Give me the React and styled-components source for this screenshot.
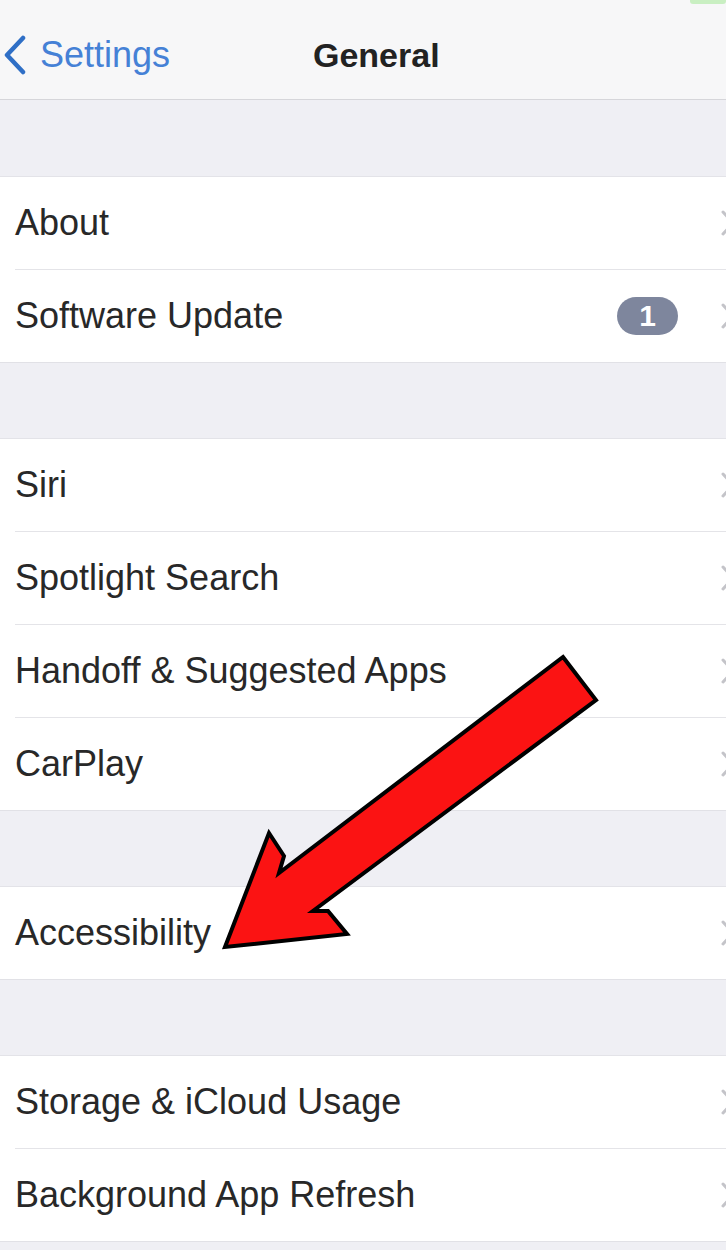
import React from "react"
import styled, {createGlobalStyle} from "styled-components"

const Global = createGlobalStyle`
    html, body {
        margin: 0px;
        padding: 0px;
        background-color: #efeff4;
    }
    body {
        font-family: "Liberation Sans", Arial, sans-serif;
        -webkit-font-smoothing: antialiased;
    }
`

const Screen = styled.div`
    position: relative;
    width: 726px;
    height: 1250px;
    overflow: hidden;
    background-color: #efeff4;
`
const StatusStrip = styled.div`
    display: flex;
    justify-content: flex-end;
    height: 6px;
    background-color: #f7f7f8;
`
const BatteryTip = styled.div`
    width: 36px;
    height: 4px;
    border-radius: 0px 0px 3px 3px;
    background-color: #c9efc2;
`
const NavBar = styled.div`
    display: flex;
    align-items: center;
    height: 93px;
    background-color: #f7f7f8;
    border-bottom: 1px solid #d6d6da;
`
const BackButton = styled.div`
    display: flex;
    align-items: center;
    gap: 13px;
    padding-left: 3px;
    width: 290px;
    color: #4581d6;
    font-size: 36px;
    margin-top: 5px;
`
const Title = styled.div`
    font-size: 34px;
    font-weight: 700;
    color: #222222;
    margin-left: 20px;
    margin-top: 5px;
`
const Gap = styled.div`
    height: ${props => props.size}px;
    background-color: #efeff4;
    border-bottom: 1px solid #e3e3e8;
`
const Group = styled.div`
    background-color: #ffffff;
    border-bottom: 1px solid #e1e1e6;
`
const Row = styled.div`
    display: flex;
    align-items: center;
    height: 92px;
    margin-left: 15px;
    border-bottom: ${props => props.last ? "none" : "1px solid #e4e4e8"};
`
const Label = styled.div`
    flex: 1;
    font-size: 36px;
    color: #282828;
`
const Badge = styled.div`
    display: flex;
    align-items: center;
    justify-content: center;
    width: 61px;
    height: 38px;
    border-radius: 19px;
    background-color: #7e869d;
    color: #ffffff;
    font-size: 30px;
    font-weight: 700;
    margin-right: 43px;
`
const Chevron = styled.svg`
    flex: none;
    width: 14px;
    height: 26px;
    margin-right: -9px;
`

const ArrowLayer = styled.svg`
    position: absolute;
    top: 0px;
    left: 0px;
    pointer-events: none;
`

const groups = [
    [{label: "About"}, {label: "Software Update", badge: "1"}],
    [{label: "Siri"}, {label: "Spotlight Search"}, {label: "Handoff & Suggested Apps"}, {label: "CarPlay"}],
    [{label: "Accessibility"}],
    [{label: "Storage & iCloud Usage"}, {label: "Background App Refresh"}],
]

const RowChevron = () =>
    <Chevron viewBox="0 0 14 26">
        <path d="M2 2 L12 13 L2 24" fill="none" stroke="#c4c4c9" strokeWidth="3" strokeLinecap="round" strokeLinejoin="round" />
    </Chevron>

export default function App() {
    return <Screen>
        <Global />
        <StatusStrip>
            <BatteryTip />
        </StatusStrip>
        <NavBar>
            <BackButton>
                <svg width="24" height="40" viewBox="0 0 24 40">
                    <path d="M20 3 L4 20 L20 37" fill="none" stroke="#2f6fc6" strokeWidth="4.5" strokeLinecap="round" strokeLinejoin="round" />
                </svg>
                <span>Settings</span>
            </BackButton>
            <Title>General</Title>
        </NavBar>
        {groups.map((items, gi) =>
            <React.Fragment key={gi}>
                <Gap size={gi === 0 ? 76 : 75} />
                <Group>
                    {items.map((item, i) =>
                        <Row key={item.label} last={i === items.length - 1}>
                            <Label>{item.label}</Label>
                            {item.badge && <Badge>{item.badge}</Badge>}
                            <RowChevron />
                        </Row>
                    )}
                </Group>
            </React.Fragment>
        )}
        <Gap size={20} />
        <ArrowLayer width="726" height="1250" viewBox="0 0 726 1250">
            <polygon
                points="563,657 596,700 313,911 328,911 347,934 225,947 269,833 284,856 279,873"
                fill="#fb1313"
                stroke="#000000"
                strokeWidth="4"
                strokeLinejoin="miter"
            />
        </ArrowLayer>
    </Screen>
}
